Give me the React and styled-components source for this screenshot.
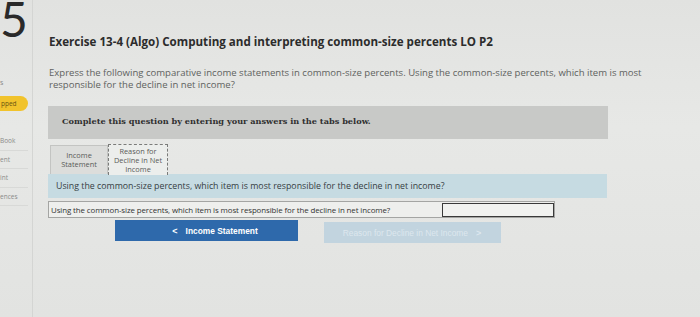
import { createGlobalStyle, styled } from "styled-components";

const Global = createGlobalStyle`
    html, body {
        margin: 0;
        padding: 0;
        background: #e3e4e2;
    }
    * { box-sizing: border-box; }
`;

export default function App() {
    return (
        <>
            <Global />
            <Page>
                <Sidebar>
                    <BigNumber>5</BigNumber>
                    <SideLabel>s</SideLabel>
                    <Skipped>pped</Skipped>
                    <SideList>
                        <SideItem>Book</SideItem>
                        <SideItem>ent</SideItem>
                        <SideItem>int</SideItem>
                        <SideItem>ences</SideItem>
                    </SideList>
                </Sidebar>
                <Main>
                    <Title>Exercise 13-4 (Algo) Computing and interpreting common-size percents LO P2</Title>
                    <Prompt>
                        Express the following comparative income statements in common-size percents. Using the common-size percents, which item is most
                        <br />
                        responsible for the decline in net income?
                    </Prompt>
                    <Instruction>Complete this question by entering your answers in the tabs below.</Instruction>
                    <Tabs>
                        <Tab>Income<br />Statement</Tab>
                        <Tab active>Reason for<br />Decline in Net<br />Income</Tab>
                    </Tabs>
                    <QuestionBar>Using the common-size percents, which item is most responsible for the decline in net income?</QuestionBar>
                    <AnswerRow>
                        <AnswerLabel>Using the common-size percents, which item is most responsible for the decline in net income?</AnswerLabel>
                        <AnswerInput />
                    </AnswerRow>
                    <NavRow>
                        <NavButton><Chevron>&lt;</Chevron>Income Statement</NavButton>
                        <NavButton disabled>Reason for Decline in Net Income<Chevron>&gt;</Chevron></NavButton>
                    </NavRow>
                </Main>
            </Page>
        </>
    );
}

const Page = styled.div`
    display: flex;
    width: 700px;
    height: 317px;
    overflow: hidden;
    background: linear-gradient(180deg, #e1e2e0 0%, #e7e8e6 40%, #e2e3e1 100%);
    font-family: "Open Sans", "Liberation Sans", sans-serif;
`;

const Sidebar = styled.div`
    width: 33px;
    flex-shrink: 0;
    border-right: 1px solid #d4d5d3;
    display: flex;
    flex-direction: column;
`;

const BigNumber = styled.div`
    font-family: "Lato", sans-serif;
    font-weight: 400;
    font-size: 48px;
    line-height: 38px;
    height: 38px;
    color: #2a2a2a;
`;

const SideLabel = styled.div`
    font-size: 7px;
    line-height: 10px;
    color: #888;
    margin-top: 40px;
`;

const Skipped = styled.div`
    margin-top: 8px;
    width: 28px;
    height: 15px;
    background: #f1c32c;
    border-radius: 0 8px 8px 0;
    font-size: 6.5px;
    line-height: 15px;
    color: #6a5410;
    padding-left: 1px;
`;

const SideList = styled.div`
    margin-top: 21px;
    display: flex;
    flex-direction: column;
`;

const SideItem = styled.div`
    height: 18.5px;
    font-size: 6.5px;
    line-height: 18px;
    color: #8a8b89;
    border-bottom: 1px solid #d8d9d7;
    width: 28px;
`;

const Main = styled.div`
    padding: 34px 0 0 15px;
    width: 575px;
    display: flex;
    flex-direction: column;
`;

const Title = styled.div`
    font-weight: 700;
    font-size: 11.6px;
    color: #2c2c2c;
    line-height: 16px;
    white-space: nowrap;
    margin-left: 1px;
`;

const Prompt = styled.div`
    margin-top: 17px;
    font-size: 9.55px;
    line-height: 12px;
    color: #606260;
    white-space: nowrap;
    margin-left: 1px;
`;

const Instruction = styled.div`
    margin-top: 15px;
    width: 560px;
    height: 33px;
    background: #c8c9c7;
    padding-left: 14px;
    font-family: "DejaVu Serif", serif;
    font-weight: 700;
    font-size: 8.2px;
    line-height: 30px;
    color: #303030;
    white-space: nowrap;
`;

const Tabs = styled.div`
    margin-top: 4px;
    display: flex;
    align-items: flex-end;
    margin-left: 2px;
    height: 31px;
`;

const Tab = styled.div`
    width: ${p => (p.active ? 60 : 58)}px;
    height: ${p => (p.active ? 31 : 29)}px;
    font-size: 7.4px;
    line-height: 9px;
    text-align: center;
    color: #5a5b59;
    display: flex;
    align-items: center;
    justify-content: center;
    background: ${p => (p.active ? "#eceeec" : "#dcdddb")};
    border: 1px ${p => (p.active ? "dashed #7a7b79" : "solid #c3c4c2")};
    border-bottom: none;
    position: relative;
    z-index: 1;
    margin-bottom: ${p => (p.active ? -1 : 0)}px;
`;

const QuestionBar = styled.div`
    width: 559px;
    height: 24px;
    background: #c6dbe2;
    padding-left: 8px;
    font-size: 8.8px;
    line-height: 24px;
    color: #363e42;
    white-space: nowrap;
`;

const AnswerRow = styled.div`
    margin-top: 3px;
    width: 507px;
    height: 17px;
    border: 1px solid #a4a5a3;
    background: #eeefed;
    display: flex;
    align-items: center;
    justify-content: space-between;
    padding-left: 2px;
`;

const AnswerLabel = styled.div`
    font-size: 7.9px;
    color: #333;
    white-space: nowrap;
    letter-spacing: -0.1px;
`;

const AnswerInput = styled.div`
    width: 112px;
    height: 14px;
    border: 1px solid #3a3a3a;
    background: #f1f2f0;
`;

const NavRow = styled.div`
    margin-top: 2px;
    width: 507px;
    display: flex;
    justify-content: center;
    gap: 26px;
    padding-left: 12px;
`;

const NavButton = styled.div`
    width: ${p => (p.disabled ? 177 : 183)}px;
    height: 21px;
    margin-top: ${p => (p.disabled ? 2 : 0)}px;
    background: ${p => (p.disabled ? "#c2d4df" : "#2e69ab")};
    color: ${p => (p.disabled ? "#dde7ee" : "#ffffff")};
    font-family: "Liberation Sans", Arial, sans-serif;
    font-weight: ${p => (p.disabled ? 400 : 700)};
    font-size: 8.4px;
    display: flex;
    align-items: center;
    justify-content: center;
    gap: 8px;
    padding-left: ${p => (p.disabled ? 0 : 18)}px;
`;

const Chevron = styled.span`
    font-size: 9px;
    font-weight: 700;
`;
